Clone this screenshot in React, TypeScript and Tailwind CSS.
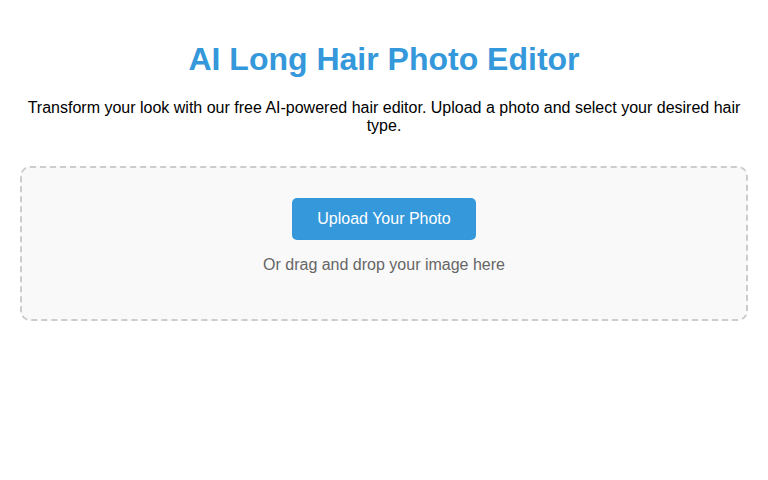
export default function App() {
  return (
    <div className="min-h-screen bg-white p-5 font-['Liberation_Sans',Arial,sans-serif] text-black">
      <div className="mx-auto max-w-[800px] text-center">
        <h1 className="my-[21px] text-[32px] font-bold leading-[37px] text-[#3498db]">
          AI Long Hair Photo Editor
        </h1>
        <p className="mt-[17px] mb-4 text-base leading-[18.4px]">
          Transform your look with our free AI-powered hair editor. Upload a photo and select your desired hair type.
        </p>

        {/* upload drop zone */}
        <div className="mt-[30px] rounded-[10px] border-2 border-dashed border-[#ccc] bg-[#f9f9f9] px-[30px] pt-[30px] pb-[29px]">
          <button className="rounded-[5px] bg-[#3498db] px-[25px] py-3 text-base leading-[18px] text-white">
            Upload Your Photo
          </button>
          <p className="my-4 text-base leading-[18px] text-[#666]">Or drag and drop your image here</p>
        </div>
      </div>
    </div>
  );
}
